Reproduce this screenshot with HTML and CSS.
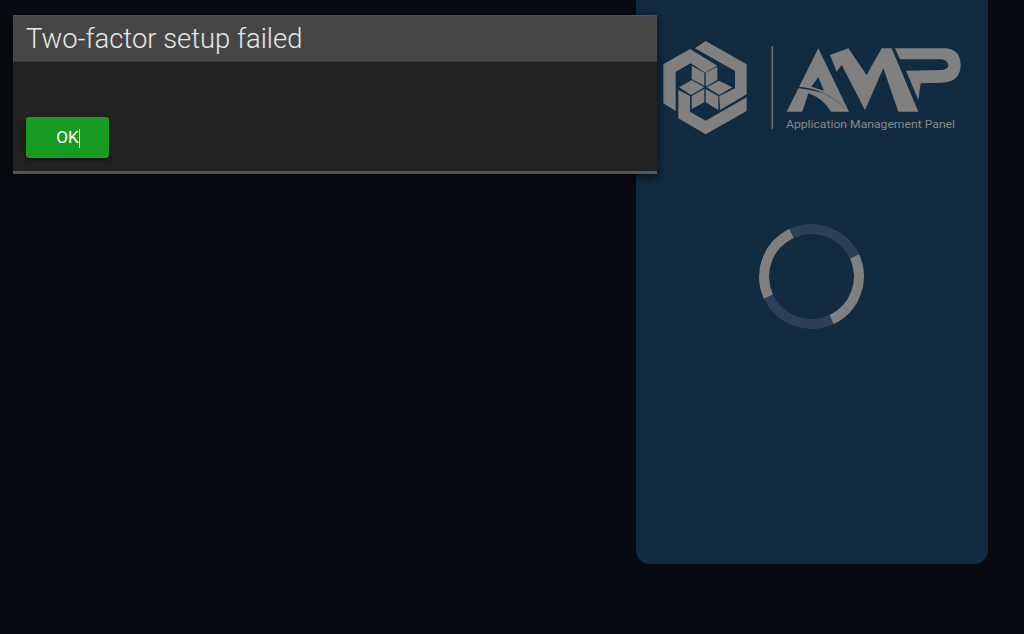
FILE: index.html
```html
<!DOCTYPE html>
<html lang="en">
<head>
<meta charset="utf-8">
<title>Two-factor setup failed</title>
<link rel="stylesheet" href="styles.css">
</head>
<body>
<main class="card">
  <svg class="logo" viewBox="650 30 320 115" width="320" height="115" role="img" aria-label="AMP">
    <g class="mark" transform="translate(655 35) scale(.33333)">
      <polygon points="120,40 152,18 275,88 275,178 195,225 193,183 240,160 240,108"/>
      <polygon points="25,88 105,42 187,92 150,113 107,85 62,110 62,228 25,205"/>
      <polygon points="70,165 105,183 105,230 152,257 275,187 275,228 152,298 70,250"/>
      <polygon points="110,92 148,113 148,152 110,132"/>
      <polygon points="152,113 187,95 187,135 152,155"/>
      <polygon points="72,157 110,135 148,157 108,180"/>
      <polygon points="155,157 192,137 232,157 193,180"/>
      <polygon points="110,183 148,162 148,202 110,222"/>
      <polygon points="152,162 190,183 190,225 152,202"/>
    </g>
    <rect class="mark" x="771.7" y="46" width="1.2" height="83"/>
    <g class="mark" transform="translate(650 30) scale(.33333)">
      <path fill-rule="evenodd" d="M505 55L597 245H543Q520 205 475 190L457 245H410ZM505 142L484 170L522 182Z"/>
      <path class="swoosh" d="M405 170Q470 165 525 190Q470 175 405 170Z"/>
      <path class="swoosh-faint" d="M525 190Q565 210 595 242Q560 212 520 192Z"/>
      <path d="M540 75L595 55L650 135L695 55H725L805 245H745L700 115L645 240L575 105L560 125Z"/>
      <path d="M735 55H880C925 55 932 85 932 105C932 135 915 158 875 158L812 160L805 210L768 122L870 120C885 120 895 115 895 105C895 100 890 88 870 88H750Z"/>
    </g>
    <text class="logo-text" x="786" y="128" textLength="169" lengthAdjust="spacingAndGlyphs">Application Management Panel</text>
  </svg>
  <div class="spinner"></div>
</main>
<section class="dialog">
  <h1 class="dialog-title">Two-factor setup failed</h1>
  <div class="dialog-body">
    <button class="ok" type="button">OK<span class="caret"></span></button>
  </div>
</section>
</body>
</html>
```
FILE: styles.css
```css
* { box-sizing: border-box; }
html, body { height: 100%; }
body {
  margin: 0;
  background: #070b11;
  font-family: Roboto, "Liberation Sans", sans-serif;
  display: flex;
  justify-content: flex-end;
  align-items: flex-start;
  padding-right: 36px;
  overflow: hidden;
}
.card {
  width: 352px;
  height: 564px;
  background: #112b40;
  border-radius: 0 0 14px 14px;
  padding: 30px 18px 0 14px;
  display: flex;
  flex-direction: column;
  align-items: center;
}
.logo { display: block; flex: none; }
.mark { fill: #808080; }
.swoosh { fill: #112b40; }
.swoosh-faint { fill: #5f6a72; }
.logo-text {
  fill: #8a8a8a;
  font-family: Roboto, sans-serif;
  font-size: 11px;
  font-weight: 400;
}
.spinner {
  width: 105px;
  height: 105px;
  margin-top: 79px;
  margin-left: 3px;
  border-radius: 50%;
  border: 10px solid;
  border-color: #2b4153 #808080 #2b4153 #808080;
  transform: rotate(20deg);
}
.dialog {
  position: absolute;
  left: 13px;
  top: 15px;
  width: 644px;
  height: 159px;
  background: #222;
  border-bottom: 3px solid #555;
  box-shadow: 0 3px 10px rgba(0, 0, 0, .6);
  display: flex;
  flex-direction: column;
}
.dialog-title {
  margin: 0;
  height: 47px;
  padding: 0 13px;
  background: #464646;
  border-top: 1px solid #4e4e4e;
  border-bottom: 1px solid #3c3c3c;
  color: #e8e8e8;
  font-size: 27.4px;
  font-weight: 300;
  line-height: 46px;
  white-space: nowrap;
}
.dialog-body {
  flex: 1;
  padding: 55px 13px 0;
}
.ok {
  display: block;
  width: 83px;
  height: 41px;
  padding: 0;
  border: 0;
  border-radius: 3px;
  background: #179c21;
  color: #fff;
  font-family: inherit;
  font-size: 17px;
  font-weight: 400;
  box-shadow: 0 2px 4px rgba(0, 0, 0, .5);
}
.caret {
  display: inline-block;
  width: 1px;
  height: 19px;
  margin-right: -1px;
  background: #fff;
  vertical-align: -5px;
}
```
